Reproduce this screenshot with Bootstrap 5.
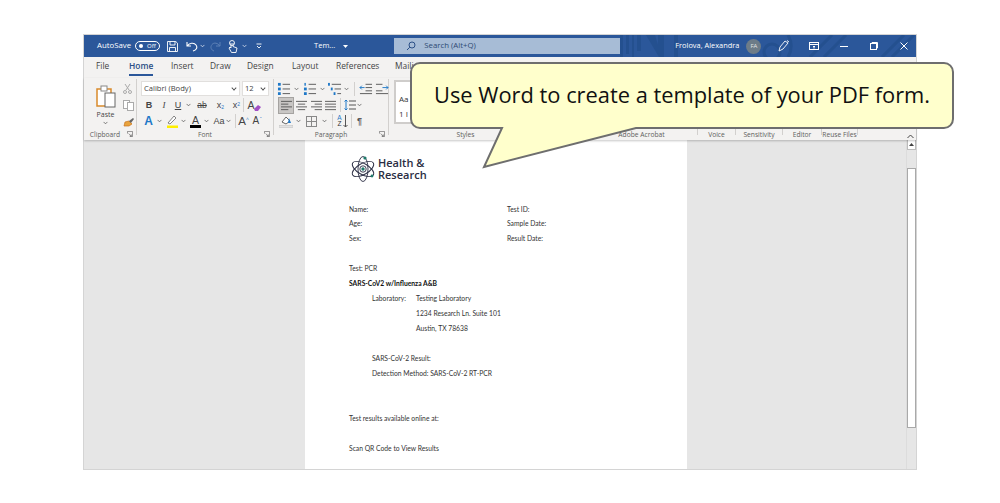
<!DOCTYPE html>
<html lang="en"><head><meta charset="utf-8"><title>Word</title>
<link href="https://cdn.jsdelivr.net/npm/bootstrap@5.3.0/dist/css/bootstrap.min.css" rel="stylesheet">
<style>
html,body{height:503px;overflow:hidden;background:#fff}
body{padding:35px 84px 34px;font-family:"Open Sans","Noto Sans",sans-serif;position:relative}
.wd-win{width:832px;height:434px;outline:1px solid #d4d4d4}
.wd-title{height:22px;background:#2b579a;color:#fff;font-size:7.8px;position:relative;flex:none}
.wd-title>*{flex:none}
.wd-pattern{position:absolute;left:536px;top:0}
.wd-toggle{width:25px;height:10px;border:1px solid #fff;border-radius:6px;font-size:6px;line-height:8px;margin:0 7px 0 4px;padding-left:11px;position:relative}
.wd-toggle::before{content:"";position:absolute;left:3px;top:2px;width:4px;height:4px;border-radius:50%;background:#fff}
.wd-search{width:226px;height:16px;background:#a7bcd6;color:#333;padding-left:12px;gap:8px;position:relative}
.wd-avatar{width:15px;height:15px;border-radius:50%;background:#6d7c88;font-size:6px;line-height:15px;text-align:center;color:#e6e6e6}
.wd-tabs{height:21px;background:#f3f2f1;font-size:8.4px;color:#444;flex:none;padding-bottom:2px}
.wd-tab{position:relative;width:0;white-space:nowrap}
.wd-tabon{font-weight:600;color:#2b4f86}
.wd-tabon::after{content:"";position:absolute;left:0;top:14px;width:24px;height:2px;background:#2b579a}
.wd-ribbon{height:62px;background:#f3f2f1;flex:none;box-shadow:0 1px 2px rgba(0,0,0,.22);position:relative;z-index:1;font-size:6.6px;color:#605e5c}
.wd-grp{border-right:1px solid #d2d0ce;height:56px;margin-top:1px;position:relative;flex:none;padding-top:1px}
.wd-cap{position:absolute;left:0;right:0;bottom:-4px;text-align:center;font-size:6.7px;line-height:9px;color:#605e5c;white-space:nowrap}
.wd-launch{position:absolute;right:3px;bottom:-2px}
.wd-rw{height:16px;display:flex;align-items:center;padding-left:3px}
.wd-i{flex:none;display:block;margin-right:var(--m,0)}
.wd-sel{height:15px;background:#fff;border:1px solid #e1dfdd;font-size:7.6px;color:#444;line-height:13px;padding-left:2px;position:relative;flex:none}
.wd-sel::after{content:"";position:absolute;right:3px;top:4px;width:4px;height:4px;border-right:1px solid #444;border-bottom:1px solid #444;transform:rotate(45deg) scale(.9)}
.wd-sep{width:1px;height:14px;background:#d2d0ce;flex:none}
.wd-lt{font-size:9px;font-family:"Liberation Sans",sans-serif;line-height:14px;color:#444;flex:none;text-align:center}
.wd-on{background:#c8c6c4;outline:1px solid #a5a3a1}
.wd-styles{position:absolute;left:5px;top:1px;width:60px;height:44px;background:#fff;border:2px solid #cfcdcb;padding:9px 0 0 3px;font-size:8px;color:#333;line-height:15px}
.wd-docarea{flex:1 1 0;min-height:0;background:#e6e6e6;overflow:hidden}
.wd-gutter{width:221px;flex:none}
.wd-page{width:382px;flex:none;background:#fff;padding:15px 0 0 44px;font-family:Lato,"Liberation Sans",sans-serif;font-size:6.75px;color:#333}
.wd-logo{height:28px;margin-left:1px;margin-bottom:18.5px;gap:2px;color:#2a2d43;font-family:"Open Sans",sans-serif;font-weight:600;font-size:11px;line-height:12px}
.wd-ln{height:14.95px;line-height:14.95px;white-space:nowrap;display:flex}
.wd-c1{width:158px;flex:none}
.wd-in1{padding-left:23px}
.wd-c2{width:44px;flex:none}
.wd-sb{width:10px;flex:none;margin-left:219px;background:#e6e6e6;position:relative;border-left:1px solid #dcdcdc}
.wd-up{height:10px;background:#fff;border:1px solid #bbb;border-top:0}
.wd-thumb{height:260px;margin-top:18px;background:#fff;border:1px solid #a9a9a9}
.wd-callout{position:absolute;left:409px;top:60px;width:547px;height:110px;z-index:2}
.wd-callout svg{position:absolute;left:0;top:0}
.wd-callout div{position:absolute;left:25px;top:20px;font-size:21.85px;line-height:30px;color:#111;white-space:nowrap;font-family:"Open Sans",sans-serif}
.wd-collapse{position:absolute;right:2px;bottom:1px}
</style></head>
<body>
<svg width="0" height="0" class="position-absolute"><defs>
<symbol id="chev" viewBox="0 0 6 4"><path d="M.7.7 3 3l2.3-2.3" fill="none" stroke="#555" stroke-width=".9"/></symbol>
<symbol id="chevw" viewBox="0 0 6 4"><path d="M.7.7 3 3l2.3-2.3" fill="none" stroke="#e8eef6" stroke-width=".9"/></symbol>
<symbol id="launch" viewBox="0 0 7 7"><path d="M.5 3V.5h6v6H3.500M2 3l3 3M5 4v2H3" fill="none" stroke="#666" stroke-width=".8"/></symbol>
<symbol id="bul" viewBox="0 0 15 14"><g fill="#1e78c8"><rect x="1" y="1" width="3" height="3"/><rect x="1" y="6" width="3" height="3"/><rect x="1" y="11" width="3" height="3"/></g><path d="M6 2.500h8M6 7.500h8M6 12.500h8" stroke="#555"/></symbol>
<symbol id="num" viewBox="0 0 15 14"><g fill="#1e78c8"><rect x="1.500" y="1" width="1.500" height="3"/><rect x="1" y="6" width="3" height="3"/><rect x="1" y="11" width="3" height="3"/></g><path d="M6 2.500h8M6 7.500h8M6 12.500h8" stroke="#555"/></symbol>
<symbol id="mlv" viewBox="0 0 15 14"><g fill="#1e78c8"><rect x="0" y="1" width="2" height="3"/><rect x="3" y="6" width="2" height="3"/><rect x="6" y="11" width="2" height="3"/></g><path d="M4 2.500h10M7 7.500h7M10 12.500h4" stroke="#555"/></symbol>
<symbol id="dec" viewBox="0 0 15 14"><path d="M7 2.500h7M7 6h7M7 9.500h7M1 12.500h13" stroke="#555"/><path d="M6 6H1m2-2L1 6l2 2" stroke="#1e78c8" fill="none"/></symbol>
<symbol id="inc" viewBox="0 0 15 14"><path d="M1 2.500h7M1 9.500h7M1 12.500h13" stroke="#555"/><path d="M8 6h6m-2-2 2 2-2 2" stroke="#1e78c8" fill="none"/></symbol>
<symbol id="al" viewBox="0 0 12 11"><path d="M0 1h12M0 4h8M0 7h12M0 10h8" stroke="#555"/></symbol>
<symbol id="ac" viewBox="0 0 12 11"><path d="M0 1h12M2 4h8M0 7h12M2 10h8" stroke="#555"/></symbol>
<symbol id="ar" viewBox="0 0 12 11"><path d="M0 1h12M4 4h8M0 7h12M4 10h8" stroke="#555"/></symbol>
<symbol id="aj" viewBox="0 0 12 11"><path d="M0 1h12M0 4h12M0 7h12M0 10h12" stroke="#555"/></symbol>
</defs></svg>

<div class="wd-win d-flex flex-column">
 <div class="wd-title d-flex align-items-center">
  <svg class="wd-pattern" width="296" height="22" viewBox="0 0 296 22"><g fill="#24508f"><rect x="0" width="3" height="22"/><rect x="6" width="3" height="19"/><rect x="12" width="2" height="22"/><rect x="17" width="4" height="16"/><path d="M26 0h9l3 10V0h6v22h-5z"/><rect x="54" width="4" height="22"/></g><g fill="none" stroke="#24508f" stroke-width="3"><circle cx="152" cy="17" r="8"/><path d="M168 0a22 22 0 0 1 0 22M190 22 212 0M204 22 226 0M262 22 284 0M272 22 294 0"/></g></svg>
  <span style="margin-left:13px;position:relative">AutoSave</span>
  <span class="wd-toggle">Off</span>
  <svg class="wd-i" width="11" height="11" viewBox="0 0 11 11" fill="none" stroke="#fff" stroke-width=".9"><path d="M.5.500h8.300l1.700 1.700v8.300H.5zM3 .5v3.500h5V.5M2.500 10.500V6.500h6v4"/></svg>
  <svg class="wd-i" style="margin-left:8px" width="12" height="11" viewBox="0 0 12 11" fill="none" stroke="#fff" stroke-width="1.100"><path d="M1 1v4h4M1.300 5C3 2 8 1 10 4s0 5-3 6"/></svg>
  <svg class="wd-i" style="margin-left:2px" width="5" height="4"><use href="#chevw"/></svg>
  <svg class="wd-i" style="margin-left:5px" width="11" height="11" viewBox="0 0 11 11" fill="none" stroke="#5d81b6" stroke-width="1"><path d="M10 1v4H6M9.700 5C8 2 4 1 2 3.500S1 9 4 10"/></svg>
  <svg class="wd-i" style="margin-left:7px" width="10" height="13" viewBox="0 0 10 13" fill="none" stroke="#fff" stroke-width=".9"><circle cx="4" cy="3" r="2.500"/><path d="M3 3v5L2 7 1 8l2.500 4.500H8L9 8 5 6.500V3"/></svg>
  <svg class="wd-i" style="margin-left:4px" width="5" height="4"><use href="#chevw"/></svg>
  <svg class="wd-i" style="margin-left:9px" width="6" height="6" viewBox="0 0 6 6"><path d="M.5 1h5M1 3l2 2 2-2" fill="none" stroke="#fff" stroke-width=".9"/></svg>
  <span style="margin-left:52px;position:relative;font-size:7.500px">Tem...</span>
  <svg class="wd-i" style="margin-left:8px" width="5" height="3" viewBox="0 0 5 3"><path d="M0 0h5L2.500 3z" fill="#fff"/></svg>
  <div class="wd-search d-flex align-items-center" style="margin-left:46px">
   <svg width="10" height="10" viewBox="0 0 10 10" fill="none" stroke="#2b4f86"><circle cx="6" cy="4" r="3"/><path d="M3.800 6.200 1 9"/></svg>
   <span style="color:#2e4a74">Search (Alt+Q)</span>
  </div>
  <span style="margin-left:55px;position:relative;font-size:7.400px">Frolova, Alexandra</span>
  <span class="wd-avatar" style="margin-left:7px;position:relative">FA</span>
  <svg class="wd-i" style="margin-left:17px;position:relative" width="12" height="12" viewBox="0 0 12 12" fill="none" stroke="#fff" stroke-width=".9"><path d="M1 11l1-4 5-6 3 2-5 6zM9 .5l2 1.500"/></svg>
  <svg class="wd-i" style="margin-left:19px;position:relative" width="10" height="8" viewBox="0 0 10 8" fill="none" stroke="#fff"><rect x=".5" y=".5" width="9" height="7"/><path d="M.5 2.500h9M5 6.500V4M4 5l1-1 1 1"/></svg>
  <svg class="wd-i" style="margin-left:21px;position:relative" width="8" height="1"><rect width="8" height="1" fill="#fff"/></svg>
  <svg class="wd-i" style="margin-left:22px;position:relative" width="8" height="8" viewBox="0 0 8 8" fill="none" stroke="#fff"><rect x=".5" y="1.500" width="6" height="6"/><path d="M2 1.500V.5h5.500V6h-1"/></svg>
  <svg class="wd-i" style="margin-left:22px;position:relative" width="8" height="8" viewBox="0 0 8 8" fill="none" stroke="#fff"><path d="M.5.500l7 7M7.500.5l-7 7"/></svg>
 </div>

 <div class="wd-tabs d-flex align-items-center">
  <span class="wd-tab" style="margin-left:12px">File</span>
  <span class="wd-tab wd-tabon" style="margin-left:33px">Home</span>
  <span class="wd-tab" style="margin-left:42px">Insert</span>
  <span class="wd-tab" style="margin-left:39px">Draw</span>
  <span class="wd-tab" style="margin-left:37px">Design</span>
  <span class="wd-tab" style="margin-left:45px">Layout</span>
  <span class="wd-tab" style="margin-left:44px">References</span>
  <span class="wd-tab" style="margin-left:59px">Mailings</span>
 </div>

 <div class="wd-ribbon d-flex">
  <div class="wd-grp" style="width:53px">
   <div class="d-flex" style="padding:4px 0 0 9px;gap:5px">
    <div class="text-center" style="width:25px;color:#444;font-size:7px;line-height:9px">
     <svg class="d-block mx-auto" width="20" height="24" viewBox="0 0 20 24" fill="none"><path d="M1 5h14v17H1z" fill="#fff" stroke="#d98a2b" stroke-width="1.500"/><rect x="5" y="2" width="6" height="5" fill="#fff" stroke="#888"/><rect x="9" y="9" width="10" height="14" fill="#fff" stroke="#666"/></svg>
     <span class="d-block" style="margin-top:2px">Paste</span>
     <svg class="d-block mx-auto" style="margin-top:2px" width="5" height="4"><use href="#chev"/></svg>
    </div>
    <div>
     <svg class="d-block" width="9" height="10" viewBox="0 0 9 10" fill="none" stroke="#aaa"><path d="M2 0l4 6M7 0 3 6"/><circle cx="2" cy="8" r="1.500"/><circle cx="7" cy="8" r="1.500"/></svg>
     <svg class="d-block" style="margin-top:6px" width="11" height="11" viewBox="0 0 11 11" fill="#fff" stroke="#aaa"><rect x=".5" y=".5" width="6" height="8"/><rect x="4.500" y="2.500" width="6" height="8"/></svg>
     <svg class="d-block" style="margin-top:6px" width="12" height="10" viewBox="0 0 12 10"><path d="M1 9l1-4 4-1 3 3-3 2z" fill="#e8a33d" stroke="#c9721c" stroke-width=".7"/><path d="M6 4l4-3 1 1-3 4" fill="#666"/></svg>
    </div>
   </div>
   <span class="wd-cap" style="left:1px;right:11px">Clipboard</span>
   <svg class="wd-launch" width="6" height="6"><use href="#launch"/></svg>
  </div>

  <div class="wd-grp" style="width:137px">
   <div class="wd-rw" style="height:17px">
    <div class="wd-sel" style="width:99px;margin-left:1px">Calibri (Body)</div>
    <div class="wd-sel" style="width:27px;margin-left:2px">12</div>
   </div>
   <div class="wd-rw" style="padding-left:8px">
    <span class="wd-lt fw-bold" style="width:8px">B</span>
    <span class="wd-lt fst-italic" style="width:8px;margin-left:7px;font-family:'Liberation Serif'">I</span>
    <span class="wd-lt text-decoration-underline" style="width:8px;margin-left:6px">U</span>
    <svg class="wd-i" style="margin-left:4px" width="5" height="4"><use href="#chev"/></svg>
    <span class="wd-lt text-decoration-line-through" style="width:14px;margin-left:4px;font-size:8.500px">ab</span>
    <span class="wd-lt" style="width:9px;margin-left:7px">x<sub style="color:#1e78c8;font-size:5px">2</sub></span>
    <span class="wd-lt" style="width:9px;margin-left:7px">x<sup style="color:#1e78c8;font-size:5px">2</sup></span>
    <span class="wd-sep" style="margin-left:2px"></span>
    <span class="wd-lt" style="width:8px;margin-left:3px;font-size:10.500px">A</span>
    <svg class="wd-i" style="margin-left:-1px;margin-top:5px" width="7" height="6" viewBox="0 0 7 6"><path d="M0 4 4 0l3 2-3 4H1z" fill="#a24fc5"/></svg>
   </div>
   <div class="wd-rw" style="padding-left:6px">
    <span class="wd-lt fw-bold" style="width:11px;font-size:12px;color:#1e78c8">A</span>
    <svg class="wd-i" style="margin-left:3px" width="5" height="4"><use href="#chev"/></svg>
    <svg class="wd-i" style="margin-left:5px" width="11" height="13" viewBox="0 0 11 13"><path d="M1 8l6-7 2 2-6 6z" fill="#fff" stroke="#666" stroke-width=".8"/><rect y="10.500" width="11" height="2.500" fill="#ffef00"/></svg>
    <svg class="wd-i" style="margin-left:3px" width="5" height="4"><use href="#chev"/></svg>
    <span style="margin-left:4px;width:11px;flex:none" class="d-block text-center"><span class="wd-lt d-block" style="line-height:10px;font-size:10.500px">A</span><span class="d-block" style="height:3px;background:#000"></span></span>
    <svg class="wd-i" style="margin-left:3px" width="5" height="4"><use href="#chev"/></svg>
    <span class="wd-lt" style="width:12px;margin-left:4px;font-size:9px">Aa</span>
    <svg class="wd-i" style="margin-left:1px" width="5" height="4"><use href="#chev"/></svg>
    <span class="wd-sep" style="margin-left:4px"></span>
    <span class="wd-lt" style="width:8px;margin-left:2px;font-size:11.500px">A</span>
    <span style="color:#1e78c8;font-size:5px;line-height:14px;margin-top:-4px">^</span>
    <span class="wd-lt" style="width:8px;margin-left:3px;font-size:10px">A</span>
    <span style="color:#1e78c8;font-size:5px;line-height:14px;margin-top:-4px">ˇ</span>
   </div>
   <span class="wd-cap">Font</span>
   <svg class="wd-launch" width="6" height="6"><use href="#launch"/></svg>
  </div>

  <div class="wd-grp" style="width:115px">
   <div class="wd-rw" style="height:17px;padding-left:3px">
    <svg class="wd-i" width="14" height="13"><use href="#bul"/></svg><svg class="wd-i" style="margin-left:3px" width="5" height="4"><use href="#chev"/></svg>
    <svg class="wd-i" style="margin-left:4px" width="14" height="13"><use href="#num"/></svg><svg class="wd-i" style="margin-left:3px" width="5" height="4"><use href="#chev"/></svg>
    <svg class="wd-i" style="margin-left:3px" width="14" height="13"><use href="#mlv"/></svg><svg class="wd-i" style="margin-left:2px" width="5" height="4"><use href="#chev"/></svg>
    <span class="wd-sep" style="margin-left:5px"></span>
    <svg class="wd-i" style="margin-left:4px" width="14" height="13"><use href="#dec"/></svg>
    <svg class="wd-i" style="margin-left:2px" width="14" height="13"><use href="#inc"/></svg>
   </div>
   <div class="wd-rw" style="padding-left:5px">
    <span class="wd-on d-flex align-items-center justify-content-center" style="width:14px;height:15px"><svg width="11" height="11"><use href="#al"/></svg></span>
    <svg class="wd-i" style="margin-left:3px" width="11" height="11"><use href="#ac"/></svg>
    <svg class="wd-i" style="margin-left:4px" width="11" height="11"><use href="#ar"/></svg>
    <svg class="wd-i" style="margin-left:3px" width="11" height="11"><use href="#aj"/></svg>
    <span class="wd-sep" style="margin-left:4px"></span>
    <svg class="wd-i" style="margin-left:3px" width="12" height="12" viewBox="0 0 12 12"><path d="M2 1v10M.5 2.500 2 1l1.500 1.500M.5 9.500 2 11l1.500-1.500" stroke="#1e78c8" fill="none"/><path d="M5 2h7M5 6h7M5 10h7" stroke="#555"/></svg>
    <svg class="wd-i" style="margin-left:1px" width="5" height="4"><use href="#chev"/></svg>
   </div>
   <div class="wd-rw" style="padding-left:5px">
    <svg class="wd-i" width="14" height="13" viewBox="0 0 14 13"><path d="M3 7l4-5 4 4-4 3z" fill="#fff" stroke="#666"/><path d="M10 3l2 5h-3z" fill="#1e78c8"/><rect x="0" y="10.500" width="14" height="2" fill="#e3e3e3" stroke="#bbb" stroke-width=".5"/></svg>
    <svg class="wd-i" style="margin-left:3px" width="5" height="4"><use href="#chev"/></svg>
    <svg class="wd-i" style="margin-left:5px" width="11" height="11" viewBox="0 0 11 11" fill="none" stroke="#888"><rect x=".5" y=".5" width="10" height="10"/><path d="M5.500 0v11M0 5.500h11"/></svg>
    <svg class="wd-i" style="margin-left:5px" width="5" height="4"><use href="#chev"/></svg>
    <span class="wd-sep" style="margin-left:5px"></span>
    <span style="width:7px;margin-left:3px;font-size:6.500px;line-height:6.500px;color:#333;font-family:'Liberation Sans'" class="text-center"><span class="d-block" style="color:#1e78c8">A</span>Z</span>
    <svg class="wd-i" width="5" height="13" viewBox="0 0 5 13"><path d="M2.500 0v12M.5 10l2 2 2-2" fill="none" stroke="#555"/></svg>
    <span class="wd-sep" style="margin-left:3px"></span>
    <span class="wd-lt fw-bold" style="width:9px;margin-left:3px;color:#555">¶</span>
   </div>
   <span class="wd-cap">Paragraph</span>
   <svg class="wd-launch" width="6" height="6"><use href="#launch"/></svg>
  </div>

  <div class="wd-grp" style="width:197px"><div class="wd-styles">Aa<br>1 I</div><span class="wd-cap" style="right:43px">Styles</span></div>
  <div class="wd-grp" style="width:112px"><span class="wd-cap">Adobe Acrobat</span></div>
  <div class="wd-grp" style="width:38px"><span class="wd-cap">Voice</span></div>
  <div class="wd-grp" style="width:47px"><span class="wd-cap">Sensitivity</span></div>
  <div class="wd-grp" style="width:39px"><span class="wd-cap">Editor</span></div>
  <div class="wd-grp" style="width:36px"><span class="wd-cap">Reuse Files</span></div>
  <svg class="wd-collapse" width="7" height="5" viewBox="0 0 7 5"><path d="M.5 4 3.500 1l3 3" fill="none" stroke="#444"/></svg>
 </div>

 <div class="wd-docarea d-flex">
  <div class="wd-gutter"></div>
  <div class="wd-page">
   <div class="wd-logo d-flex align-items-center">
    <svg width="26" height="28" viewBox="0 0 26 28" fill="none" stroke="#2a2d43" stroke-width=".9"><ellipse cx="13" cy="14" rx="12" ry="5.500" transform="rotate(30 13 14)"/><ellipse cx="13" cy="14" rx="12" ry="5.500" transform="rotate(-30 13 14)"/><ellipse cx="13" cy="14" rx="5" ry="12.500"/><circle cx="13" cy="14" r="3.200"/><circle cx="13" cy="14" r="1.700" fill="#1f7a6b" stroke="none"/><circle cx="15" cy="3" r="1.600" fill="#1f7a6b" stroke="none"/><circle cx="22" cy="21" r="1.400" fill="#1f7a6b" stroke="none"/></svg>
    <div>Health &amp;<br>Research</div>
   </div>
   <div class="wd-ln"><span class="wd-c1">Name:</span><span>Test ID:</span></div>
   <div class="wd-ln"><span class="wd-c1">Age:</span><span>Sample Date:</span></div>
   <div class="wd-ln"><span class="wd-c1">Sex:</span><span>Result Date:</span></div>
   <div class="wd-ln"></div>
   <div class="wd-ln">Test: PCR</div>
   <div class="wd-ln fw-bold" style="color:#111">SARS-CoV2 w/Influenza A&amp;B</div>
   <div class="wd-ln wd-in1"><span class="wd-c2">Laboratory:</span><span>Testing Laboratory</span></div>
   <div class="wd-ln wd-in1"><span class="wd-c2"></span><span>1234 Research Ln. Suite 101</span></div>
   <div class="wd-ln wd-in1"><span class="wd-c2"></span><span>Austin, TX 78638</span></div>
   <div class="wd-ln"></div>
   <div class="wd-ln wd-in1">SARS-CoV-2 Result:</div>
   <div class="wd-ln wd-in1">Detection Method: SARS-CoV-2 RT-PCR</div>
   <div class="wd-ln"></div>
   <div class="wd-ln"></div>
   <div class="wd-ln">Test results available online at:</div>
   <div class="wd-ln"></div>
   <div class="wd-ln">Scan QR Code to View Results</div>
  </div>
  <div class="wd-sb">
   <div class="wd-up d-flex align-items-center justify-content-center"><svg width="5" height="3" viewBox="0 0 5 3"><path d="M0 3 2.500 0 5 3z" fill="#444"/></svg></div>
   <div class="wd-thumb"></div>
  </div>
 </div>
</div>

<div class="wd-callout">
 <svg width="547" height="110" viewBox="0 0 547 110"><path d="M11 3H535a9 9 0 0 1 9 9V59a9 9 0 0 1-9 9H227L75 107 93 68H11a9 9 0 0 1-9-9V12a9 9 0 0 1 9-9z" fill="#ffffcc" stroke="#6e6e6e" stroke-width="2"/></svg>
 <div>Use Word to create a template of your PDF form.</div>
</div>
</body></html>
